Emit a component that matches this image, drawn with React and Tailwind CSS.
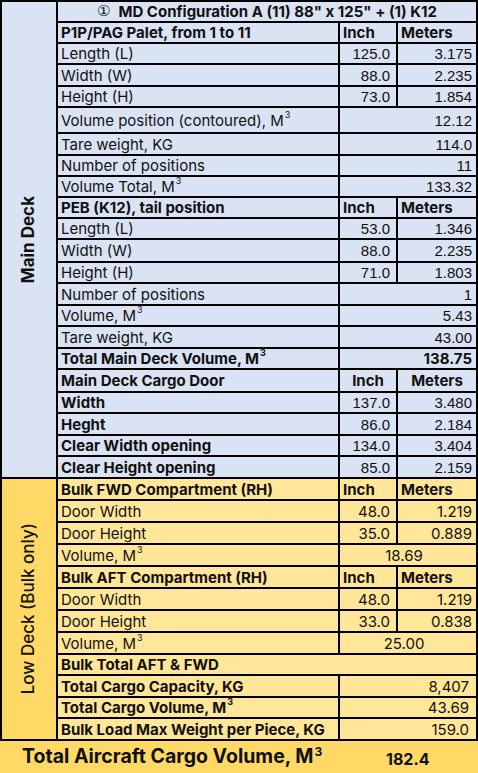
const sans = "font-['Inter','Liberation_Sans',sans-serif]";
const num = "font-['Liberation_Sans',Arial,sans-serif]";

const Sup = () => <sup className="text-[9px] top-[-0.6em] ml-[1px]">3</sup>;

const mainRows = [
  { type: "title" },
  { type: "head", label: "P1P/PAG Palet, from 1 to 11" },
  { label: "Length (L)", inch: "125.0", m: "3.175" },
  { label: "Width (W)", inch: "88.0", m: "2.235" },
  { label: "Height (H)", inch: "73.0", m: "1.854" },
  { label: <>Volume position (contoured), M<Sup /></>, span: "12.12" },
  { label: "Tare weight, KG", span: "114.0" },
  { label: "Number of positions", span: "11" },
  { label: <>Volume Total, M<Sup /></>, span: "133.32" },
  { type: "head", label: "PEB (K12), tail position" },
  { label: "Length (L)", inch: "53.0", m: "1.346" },
  { label: "Width (W)", inch: "88.0", m: "2.235" },
  { label: "Height (H)", inch: "71.0", m: "1.803" },
  { label: "Number of positions", span: "1" },
  { label: <>Volume, M<Sup /></>, span: "5.43" },
  { label: "Tare weight, KG", span: "43.00" },
  { label: <>Total Main Deck Volume, M<Sup /></>, span: "138.75", bold: true, boldValue: true },
  { type: "head", label: "Main Deck Cargo Door", center: true },
  { label: "Width", inch: "137.0", m: "3.480", bold: true },
  { label: "Heght", inch: "86.0", m: "2.184", bold: true },
  { label: "Clear Width opening", inch: "134.0", m: "3.404", bold: true },
  { label: "Clear Height opening", inch: "85.0", m: "2.159", bold: true },
];

const lowRows = [
  { type: "head", label: "Bulk FWD Compartment (RH)" },
  { label: "Door Width", inch: "48.0", m: "1.219" },
  { label: "Door Height", inch: "35.0", m: "0.889" },
  { label: <>Volume, M<Sup /></>, span: "18.69", mid: true },
  { type: "head", label: "Bulk AFT Compartment (RH)" },
  { label: "Door Width", inch: "48.0", m: "1.219" },
  { label: "Door Height", inch: "33.0", m: "0.838" },
  { label: <>Volume, M<Sup /></>, span: "25.00", mid: true },
  { type: "full", label: "Bulk Total AFT & FWD" },
  { label: "Total Cargo Capacity, KG", span: "8,407", bold: true },
  { label: <>Total Cargo Volume, M<Sup /></>, span: "43.69", bold: true },
  { label: "Bulk Load Max Weight per Piece, KG", span: "159.0", bold: true },
];

function Rows({ rows, bg, numFont, spanPad }) {
  const cell = `${bg} flex items-center text-[15px] leading-none text-[#111]`;
  return rows.map((r, i) => {
    if (r.type === "title") {
      return (
        <div key={i} className={`${cell} col-span-3 justify-center font-bold ${sans}`}>
          <span className="font-normal mr-[8px] font-['DejaVu_Sans',sans-serif] text-[15px]">①</span>
          MD Configuration A (11) 88" x 125" + (1) K12
        </div>
      );
    }
    if (r.type === "full") {
      return (
        <div key={i} className={`${cell} col-span-3 pl-[3px] font-bold ${sans}`}>
          {r.label}
        </div>
      );
    }
    if (r.type === "head") {
      const al = r.center ? "justify-center" : "pl-[3px]";
      return [
        <div key={i + "a"} className={`${cell} pl-[3px] font-bold ${sans}`}>{r.label}</div>,
        <div key={i + "b"} className={`${cell} ${al} font-bold ${sans}`}>Inch</div>,
        <div key={i + "c"} className={`${cell} ${al} font-bold ${sans}`}>Meters</div>,
      ];
    }
    const lab = (
      <div key={i + "a"} className={`${cell} pl-[3px] ${r.bold ? "font-bold" : ""} ${sans}`}>
        {r.label}
      </div>
    );
    if (r.span) {
      return [
        lab,
        <div
          key={i + "s"}
          className={`${cell} col-span-2 ${r.mid ? "justify-center pr-[8px]" : `justify-end ${spanPad}`} ${r.boldValue ? `font-bold ${sans}` : numFont}`}
        >
          {r.span}
        </div>,
      ];
    }
    return [
      lab,
      <div key={i + "b"} className={`${cell} justify-end pr-[6px] ${numFont}`}>{r.inch}</div>,
      <div key={i + "c"} className={`${cell} justify-end pr-[4px] ${numFont}`}>{r.m}</div>,
    ];
  });
}

export default function App() {
  return (
    <div className="w-[478px] h-[773px] flex flex-col bg-white">
      <div className="flex gap-[2px] bg-black border-2 border-black">
        <div className="w-[54px] bg-[#dae3f3] flex items-center justify-center">
          <span className={`[writing-mode:vertical-rl] rotate-180 font-bold text-[17px] text-[#111] ${sans}`}>
            Main Deck
          </span>
        </div>
        <div className="w-[418px] grid grid-cols-[280px_56px_78px] grid-rows-[19px_19px_19px_20px_19px_24px_20px_19px_19px_19px_19px_21px_19px_20px_19px_20px_19px_21px_19px_20px_19px_20px] gap-[2px] bg-black">
          <Rows rows={mainRows} bg="bg-[#dae3f3]" numFont={num} spanPad="pr-[4px]" />
        </div>
      </div>
      <div className="flex gap-[2px] bg-black border-2 border-t-0 border-black">
        <div className="w-[54px] bg-[#ffd966] flex items-center justify-center">
          <span className={`[writing-mode:vertical-rl] rotate-180 font-medium text-[17px] text-[#111] ${sans}`}>
            Low Deck (Bulk only)
          </span>
        </div>
        <div className="w-[418px] grid grid-cols-[280px_56px_78px] grid-rows-[20px_20px_20px_20px_20px_20px_20px_20px_19px_20px_19px_20px] gap-[2px] bg-black">
          <Rows rows={lowRows} bg="bg-[#ffe699]" numFont={sans} spanPad="pr-[7px]" />
        </div>
      </div>
      <div className={`h-[32px] bg-[#ffd966] flex items-center text-[#111] ${sans}`}>
        <span className="pl-[22px] font-bold text-[19.5px] w-[386px]">
          Total Aircraft Cargo Volume, M<sup className="text-[12px] top-[-0.6em] ml-[1px]">3</sup>
        </span>
        <span className="font-bold text-[16px] pt-[4px]">182.4</span>
      </div>
    </div>
  );
}
